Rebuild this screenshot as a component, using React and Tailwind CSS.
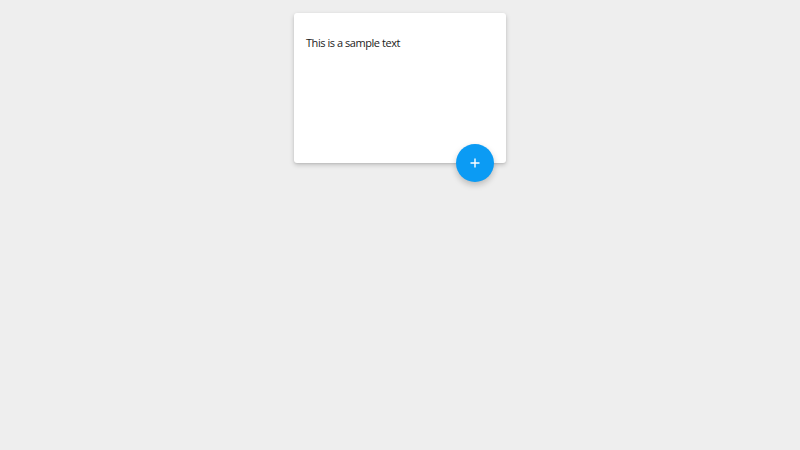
import React from "react";

export default function App() {
  return (
    <div className="min-h-[450px] w-full bg-[#eeeeee] flex justify-center pt-[13px]" style={{ fontFamily: '"Open Sans", sans-serif' }}>
      <div className="relative w-[212px] h-[150px] bg-white rounded-[3px] shadow-[0_2px_5px_rgba(0,0,0,0.18),0_1px_2px_rgba(0,0,0,0.08)]">
        <div className="pl-[12px] pt-[22px] text-[11px] leading-[15px] tracking-[-0.45px] text-[#1a1a1a]">This is a sample text</div>
        <button className="absolute left-[162px] top-[131px] w-[38px] h-[38px] rounded-full bg-[#0b9bf4] shadow-[0_3px_6px_rgba(0,0,0,0.22)] flex items-center justify-center">
          <svg width="10" height="10" viewBox="0 0 10 10">
            <path d="M5 0.5V9.5M0.5 5H9.5" stroke="white" strokeWidth="1.4" />
          </svg>
        </button>
      </div>
    </div>
  );
}
